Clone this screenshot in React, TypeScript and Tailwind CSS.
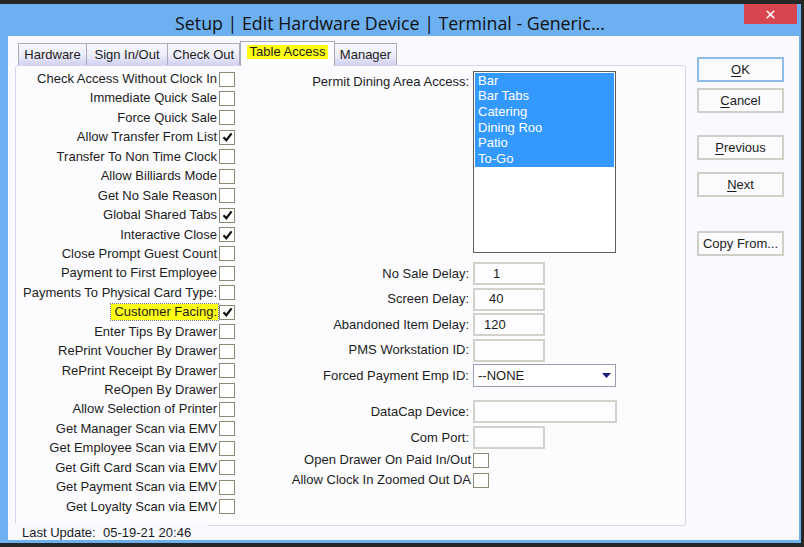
import React from 'react';
import { X } from 'lucide-react';

type Opt = { label: string; on: boolean; focus?: boolean };

const options: Opt[] = [
  { label: 'Check Access Without Clock In', on: false },
  { label: 'Immediate Quick Sale', on: false },
  { label: 'Force Quick Sale', on: false },
  { label: 'Allow Transfer From List', on: true },
  { label: 'Transfer To Non Time Clock', on: false },
  { label: 'Allow Billiards Mode', on: false },
  { label: 'Get No Sale Reason', on: false },
  { label: 'Global Shared Tabs', on: true },
  { label: 'Interactive Close', on: true },
  { label: 'Close Prompt Guest Count', on: false },
  { label: 'Payment to First Employee', on: false },
  { label: 'Payments To Physical Card Type:', on: false },
  { label: 'Customer Facing:', on: true, focus: true },
  { label: 'Enter Tips By Drawer', on: false },
  { label: 'RePrint Voucher By Drawer', on: false },
  { label: 'RePrint Receipt By Drawer', on: false },
  { label: 'ReOpen By Drawer', on: false },
  { label: 'Allow Selection of Printer', on: false },
  { label: 'Get Manager Scan via EMV', on: false },
  { label: 'Get Employee Scan via EMV', on: false },
  { label: 'Get Gift Card Scan via EMV', on: false },
  { label: 'Get Payment Scan via EMV', on: false },
  { label: 'Get Loyalty Scan via EMV', on: false },
];

const areas = ['Bar', 'Bar Tabs', 'Catering', 'Dining Roo', 'Patio', 'To-Go'];

const tabs = [
  { label: 'Hardware', w: 'w-[69px]' },
  { label: 'Sign In/Out', w: 'w-[82px]' },
  { label: 'Check Out', w: 'w-[73px]' },
  { label: 'Table Access', w: 'w-[95px]', active: true },
  { label: 'Manager', w: 'w-[63px]' },
];

const CheckBox: React.FC<{ on: boolean }> = ({ on }) => (
  <span className="w-[16px] h-[15px] shrink-0 border border-[#8a8a75] bg-white flex items-center justify-center">
    {on && (
      <svg width="11" height="10" viewBox="0 0 11 10">
        <path d="M1.5 5.2 L4.3 8.2 L9.6 1.4" fill="none" stroke="#111" strokeWidth="2.2" />
      </svg>
    )}
  </span>
);

const Field: React.FC<{ label: string; children: React.ReactNode; h?: string }> = ({ label, children, h = 'h-[23px]' }) => (
  <div className={`flex items-center ${h}`}>
    <span className="w-[238px] pr-[4px] text-right whitespace-nowrap">{label}</span>
    {children}
  </div>
);

const TextBox: React.FC<{ w: string; value?: string; pad?: string }> = ({ w, value, pad = 'pl-[8px]' }) => (
  <div className={`${w} h-[23px] border-2 border-[#d2d2ca] bg-[#fdfdff] flex items-center ${pad}`}>{value}</div>
);

const Btn: React.FC<{ k?: string; rest: string; primary?: boolean; className?: string }> = ({ k, rest, primary, className = '' }) => (
  <div
    className={`w-[87px] h-[25px] flex items-center justify-center bg-[#fbfbfe] border-2 ${
      primary ? 'border-[#8fbbe9]' : 'border-[#cfcfc8]'
    } ${className}`}
  >
    {k && <span className="underline underline-offset-2">{k}</span>}
    {rest}
  </div>
);

export default function App() {
  return (
    <div className="w-[804px] h-[547px] bg-[#262626] flex flex-col font-['Liberation_Sans',Arial,sans-serif] text-[13px] leading-[14px] text-[#1c1c1c]">
      <div className="h-[4px] shrink-0" />
      {/* window frame */}
      <div className="w-[801px] h-[539px] bg-[#6cb0f1] flex flex-col">
        <div className="h-[32px] shrink-0 flex items-start">
          <div className="flex-1 pl-[36px] pt-[8px] text-center font-['Open_Sans',sans-serif] text-[17.8px] leading-[22px] text-[#111]">
            Setup | Edit Hardware Device | Terminal - Generic...
          </div>
          <div className="w-[53px] h-[20px] mr-[4px] bg-[#d7454f] flex items-center justify-center">
            <X size={13} strokeWidth={3} color="#fff" />
          </div>
        </div>

        {/* client area */}
        <div className="ml-[8px] mr-[2px] h-[504px] bg-[#f9f9fe] flex">
          <div className="ml-[7px] w-[671px] flex flex-col">
            {/* tab strip */}
            <div className="h-[29px] pt-[5px] pl-[3px] flex items-end relative z-10">
              {tabs.map((t) =>
                t.active ? (
                  <div
                    key={t.label}
                    className={`${t.w} h-[25px] -mb-px border border-b-0 border-[#a9a9b8] bg-[#fcfcff] flex justify-center pt-[3px]`}
                  >
                    <span className="bg-[#ffff14] px-[3px] h-[14px]">{t.label}</span>
                  </div>
                ) : (
                  <div
                    key={t.label}
                    className={`${t.w} h-[22px] border border-b-0 border-[#a9a9b8] -ml-px first:ml-0 bg-linear-to-b from-[#f7f7fd] via-[#eeeefa] to-[#d2d2f3] flex justify-center pt-[4px]`}
                  >
                    {t.label}
                  </div>
                )
              )}
            </div>

            {/* tab page */}
            <div className="h-[462px] border border-[#d5d5f0] rounded-[3px] bg-[#fcfcff] flex">
              <div className="w-[219px] pt-[3.3px] flex flex-col items-end">
                {options.map((o) => (
                  <div key={o.label} className="h-[19.45px] flex items-center">
                    {o.focus ? (
                      <span className="mr-[1px] h-[16px] pl-[3px] pr-[1px] bg-[#ffff14] outline outline-1 outline-dotted outline-[#777] flex items-center">
                        {o.label}
                      </span>
                    ) : (
                      <span className="pr-[2px] whitespace-nowrap">{o.label}</span>
                    )}
                    <CheckBox on={o.on} />
                  </div>
                ))}
              </div>

              <div className="pt-[5px] flex flex-col">
                <div className="flex items-start">
                  <span className="w-[238px] pr-[4px] pt-[4px] text-right">Permit Dining Area Access:</span>
                  <div className="w-[143px] h-[182px] border border-[#5f5f5f] p-px bg-white">
                    {areas.map((a) => (
                      <div key={a} className="h-[15.6px] bg-[#3399ff] text-white pl-[3px] flex items-center">
                        {a}
                      </div>
                    ))}
                  </div>
                </div>

                <div className="mt-[9px] flex flex-col gap-[2.5px]">
                  <Field label="No Sale Delay:">
                    <TextBox w="w-[72px]" value="1" pad="pl-[18px]" />
                  </Field>
                  <Field label="Screen Delay:">
                    <TextBox w="w-[72px]" value="40" pad="pl-[14px]" />
                  </Field>
                  <Field label="Abandoned Item Delay:">
                    <TextBox w="w-[72px]" value="120" pad="pl-[9px]" />
                  </Field>
                  <Field label="PMS Workstation ID:">
                    <TextBox w="w-[72px]" />
                  </Field>
                  <Field label="Forced Payment Emp ID:">
                    <div className="w-[143px] h-[23px] border border-[#9c9cb2] bg-white flex items-center pl-[4px] pr-[4px]">
                      <span className="flex-1">--NONE</span>
                      <svg width="9" height="5" viewBox="0 0 9 5">
                        <path d="M0 0 H9 L4.5 5 Z" fill="#1b1b80" />
                      </svg>
                    </div>
                  </Field>
                </div>

                <div className="mt-[13px] flex flex-col gap-[3px]">
                  <Field label="DataCap Device:">
                    <TextBox w="w-[144px]" />
                  </Field>
                  <Field label="Com Port:">
                    <TextBox w="w-[72px]" />
                  </Field>
                </div>

                <div className="mt-[1px] flex flex-col">
                  <div className="h-[20px] flex items-center">
                    <span className="w-[238px] pr-[2px] text-right whitespace-nowrap">Open Drawer On Paid In/Out</span>
                    <CheckBox on={false} />
                  </div>
                  <div className="h-[20px] flex items-center">
                    <span className="w-[238px] pr-[2px] text-right whitespace-nowrap">Allow Clock In Zoomed Out DA</span>
                    <CheckBox on={false} />
                  </div>
                </div>
              </div>
            </div>

            <div className="relative -mt-[3px] w-[192px] h-[17px] bg-[#f9f9fe] pl-[7px] pt-[3px] whitespace-pre">
              {'Last Update:  05-19-21 20:46'}
            </div>
          </div>

          {/* dialog buttons */}
          <div className="ml-[11px] pt-[21px] flex flex-col">
            <Btn k="O" rest="K" primary />
            <Btn k="C" rest="ancel" className="mt-[6px]" />
            <Btn k="P" rest="revious" className="mt-[22px]" />
            <Btn k="N" rest="ext" className="mt-[12px]" />
            <Btn rest="Copy From..." className="mt-[34px]" />
          </div>
        </div>
      </div>
    </div>
  );
}
